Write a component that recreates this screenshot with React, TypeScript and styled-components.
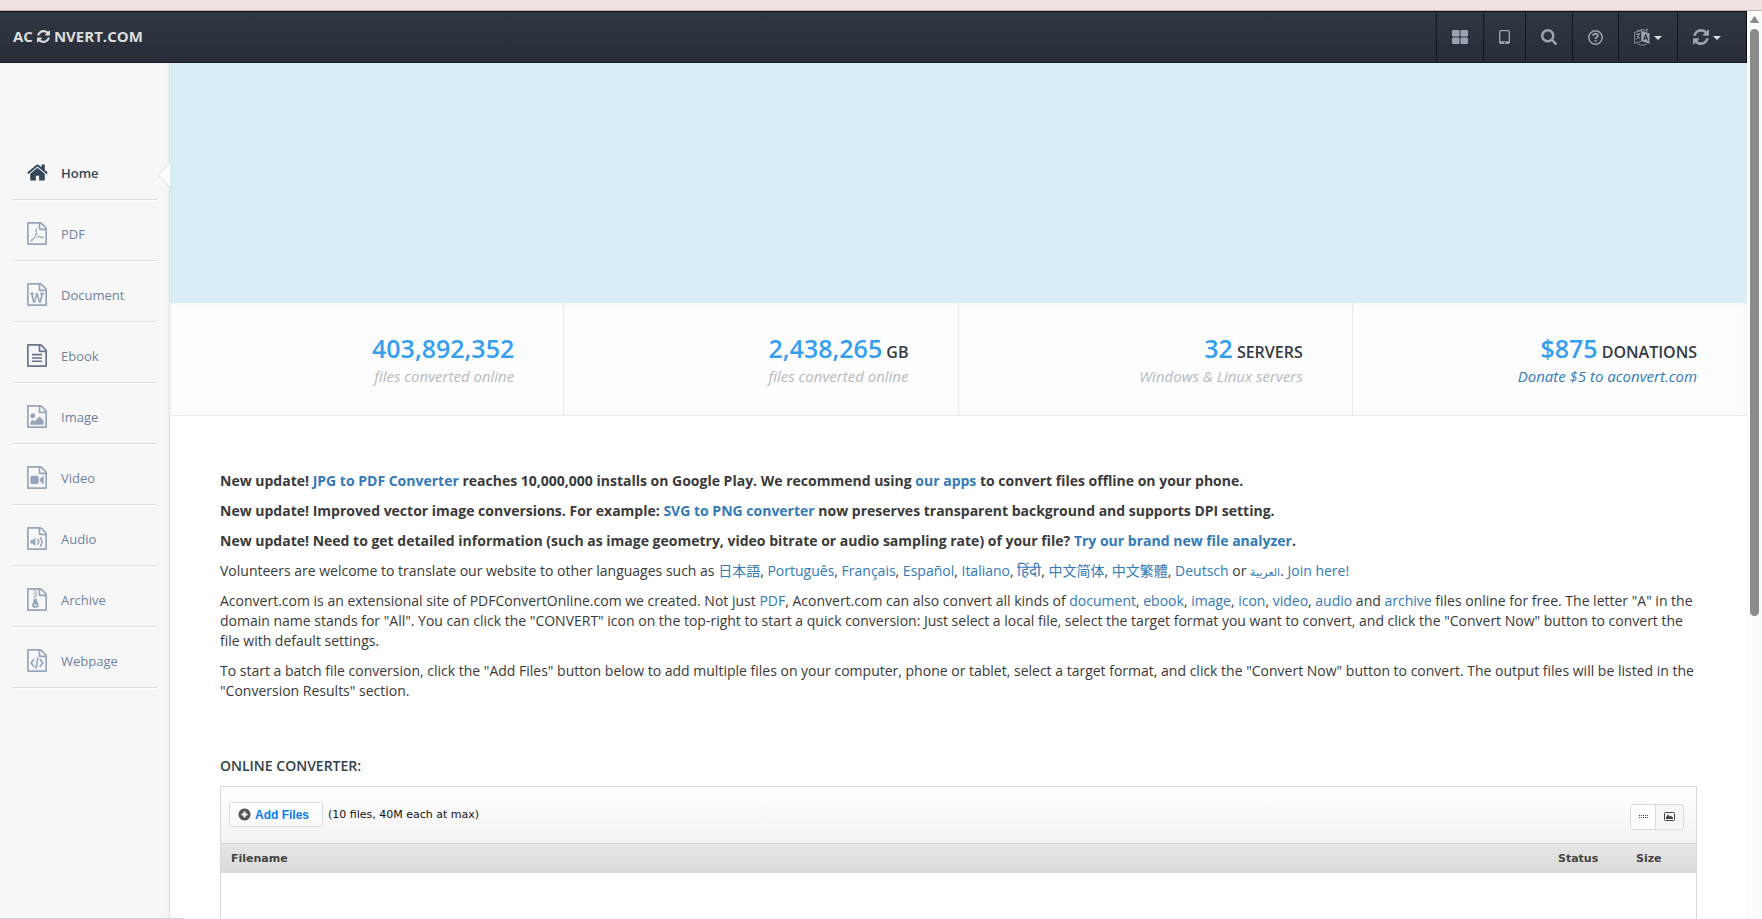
import React from "react";
import styled, { createGlobalStyle, css } from "styled-components";

const GlobalStyle = createGlobalStyle`
  *, *::before, *::after { box-sizing: border-box; }
  body {
    margin: 0;
    background: #fff;
    color: #3a3a3a;
    font: 14px/20px "Open Sans", "Noto Sans CJK SC", "DejaVu Sans", sans-serif;
  }
  a { color: #337ab7; text-decoration: none; }
  a:hover { text-decoration: underline; }
`;

/* ---------- page shell ---------- */

const Shell = styled.div`
  display: flex;
  flex-direction: column;
  height: 100vh;
  overflow: hidden;
  position: relative;
`;

const BrowserEdge = styled.div`
  flex: none;
  height: 11px;
  background: #f1e3e1;
  border-bottom: 1px solid #c4b1b1;
`;

const Viewport = styled.div`
  display: flex;
  flex: 1;
  min-height: 0;
`;

const Site = styled.div`
  display: flex;
  flex-direction: column;
  flex: 1;
  min-width: 0;
`;

const ScrollTrack = styled.div`
  flex: none;
  width: 15px;
  padding: 5px 3px 0;
  background: #fcfcfc;
`;

const ScrollArrow = styled.svg`
  display: block;
  width: 9px;
  height: 7px;
`;

const ScrollThumb = styled.div`
  margin-top: 6px;
  height: 65%;
  border-radius: 5px;
  background: #8b8b8b;
`;

const StatusEdge = styled.div`
  position: absolute;
  left: 0;
  bottom: 0;
  width: 184px;
  height: 1px;
  background: #d2d2d2;
`;

/* ---------- top bar ---------- */

const TopBar = styled.header`
  display: flex;
  flex: none;
  justify-content: space-between;
  height: 52px;
  border: 1px solid #0b0d10;
  border-left: 0;
  border-bottom-color: #181c24;
  background: linear-gradient(#2e3841, #282d39);
`;

const Brand = styled.a`
  display: flex;
  align-items: center;
  gap: 4px;
  padding: 0 13px 2px;
  color: #ddd;
  font-size: 15px;
  font-weight: 700;
  &:hover { text-decoration: none; }
`;

const BarTools = styled.nav`
  display: flex;
`;

const ToolButton = styled.button<{ $last?: boolean }>`
  display: flex;
  align-items: center;
  gap: 4px;
  padding: 0 ${(p) => (p.$last ? 25 : 15)}px 0 15px;
  border: 0;
  border-left: 1px solid #12151a;
  background: none;
  color: #9aa3b1;
  cursor: pointer;
`;

const Caret = styled.span`
  border: 4px solid transparent;
  border-top-color: #ddd;
  border-bottom: 0;
  margin-top: 2px;
`;

const Glyph = styled.svg<{ $w: number; $h: number }>`
  display: block;
  flex: none;
  width: ${(p) => p.$w}px;
  height: ${(p) => p.$h}px;
  fill: currentColor;
`;

/* ---------- side bar ---------- */

const Columns = styled.div`
  display: flex;
  flex: 1;
  min-height: 0;
`;

const SideBar = styled.nav`
  flex: none;
  width: 170px;
  padding: 76px 12px 0;
  border-right: 1px solid #d9e1e8;
  background: linear-gradient(90deg, #f7f7f7 96%, #f2f3f3);
`;

const SideItem = styled.a<{ $active?: boolean }>`
  display: flex;
  position: relative;
  align-items: center;
  gap: 14px;
  height: 61px;
  padding: 7px 0 0 15px;
  border-bottom: 1px solid #d8dde6;
  box-shadow: 0 1px 0 #fff;
  color: #6e829d;
  font-size: 13px;
  ${(p) => p.$active && css`
    color: #34475d;
    font-weight: 600;
  `}
`;

const IconCell = styled.span<{ $tone: string }>`
  display: flex;
  width: 20px;
  color: ${(p) => p.$tone};
`;

const ActiveNotch = styled.svg`
  position: absolute;
  right: -13px;
  top: 24px;
  width: 13px;
  height: 24px;
`;

/* ---------- main column ---------- */

const Main = styled.main`
  flex: 1;
  min-width: 0;
  overflow: hidden;
`;

const Banner = styled.div`
  height: 240px;
  background: #d9edf6;
`;

const Stats = styled.section`
  display: grid;
  grid-template-columns: repeat(4, 1fr);
  height: 113px;
  border-bottom: 1px solid #ebebed;
  background: #fdfdfd;
  box-shadow: inset 0 0 10px #f7f7f7;
`;

const Stat = styled.div`
  padding: 31px 49px 0 0;
  border-right: 1px solid #e6e7ec;
  text-align: right;
  &:last-child { border-right-color: transparent; }
`;

const StatHead = styled.div`
  color: #333b44;
  font-size: 16px;
  font-weight: 600;
  line-height: 28px;
`;

const StatValue = styled.span`
  color: #369ff0;
  font-size: 25px;
`;

const StatNote = styled.div`
  color: #b7babd;
  font-size: 15px;
  font-style: italic;
  line-height: 20px;
`;

const Content = styled.div`
  padding: 55px 50px 0;
`;

const Para = styled.p<{ $strong?: boolean }>`
  margin: 0 0 10px;
  font-weight: ${(p) => (p.$strong ? 700 : 400)};
`;

const LanguageLink = styled.a`
  &:lang(hi) { font-size: 15px; line-height: 16px; }
  &:lang(ar) { font-size: 11px; line-height: 16px; }
`;

const SectionTitle = styled.h2`
  margin: 55px 0 10px;
  color: #34404c;
  font-size: 14px;
  font-weight: 600;
  line-height: 20px;
`;

const Uploader = styled.section`
  min-height: 300px;
  border: 1px solid #d9d9d9;
  color: #111;
  font-family: "DejaVu Sans", sans-serif;
  font-size: 11px;
`;

const UploadBar = styled.div`
  display: flex;
  align-items: center;
  gap: 5px;
  height: 56px;
  padding: 0 12px 1px 8px;
  background: linear-gradient(#fff, #f3f3f3);
`;

const AddButton = styled.button`
  display: flex;
  align-items: center;
  gap: 4px;
  width: 94px;
  height: 25px;
  padding: 0 8px;
  border: 1px solid #d9d9d9;
  border-radius: 2px;
  background: linear-gradient(#fff, #f9f9f9);
  color: #0a7cf0;
  font: bold 12px "Liberation Sans", sans-serif;
  cursor: pointer;
`;

const ViewSwitch = styled.div`
  display: flex;
  height: 26px;
  margin: 4px 0 0 auto;
  border: 1px solid #d9d9d9;
  border-radius: 3px;
  overflow: hidden;
`;

const ViewButton = styled.button<{ $on?: boolean }>`
  display: flex;
  align-items: center;
  justify-content: center;
  width: 24px;
  padding: 0;
  border: 0;
  background: ${(p) => (p.$on ? "#fff" : "#f7f7f7")};
  color: #444;
  cursor: pointer;
  & + & {
    width: 28px;
    border-left: 1px solid #d9d9d9;
  }
`;

const FileTable = styled.table`
  width: 100%;
  border-collapse: collapse;
  table-layout: fixed;
`;

const FileHead = styled.th<{ $w?: number }>`
  width: ${(p) => (p.$w ? `${p.$w}px` : "auto")};
  height: 29px;
  padding: 1px 10px 0;
  border-top: 1px solid #d4d4d4;
  color: #444;
  text-align: left;
`;

const FileHeadRow = styled.tr`
  background: linear-gradient(#e6e6e6, #dadada);
`;

/* ---------- icons ---------- */

const REFRESH =
  "M1511 928q0 5-1 7-64 268-268 434.5t-478 166.5q-146 0-282.5-55t-243.5-157l-129 129q-19 19-45 19t-45-19-19-45v-448q0-26 19-45t45-19h448q26 0 45 19t19 45-19 45l-137 137q71 66 161 102t187 36q134 0 250-65t186-179q11-17 53-117 8-23 30-23h192q13 0 22.5 9.5t9.5 22.5zm25-800v448q0 26-19 45t-45 19h-448q-26 0-45-19t-19-45 19-45l138-138q-148-137-349-137-134 0-250 65t-186 179q-11 17-53 117-8 23-30 23h-199q-13 0-22.5-9.5t-9.5-22.5v-7q65-268 270-434.5t480-166.5q146 0 284 55.5t245 156.5l130-129q19-19 45-19t45 19 19 45z";

const SEARCH =
  "M1152 704q0-185-131.5-316.5t-316.5-131.5-316.5 131.5-131.5 316.5 131.5 316.5 316.5 131.5 316.5-131.5 131.5-316.5zm512 832q0 52-38 90t-90 38q-54 0-90-38l-343-342q-179 124-399 124-143 0-273.5-55.5t-225-150-150-225-55.5-273.5 55.5-273.5 150-225 225-150 273.5-55.5 273.5 55.5 225 150 150 225 55.5 273.5q0 220-124 399l343 343q37 37 37 90z";

const HOME =
  "M1408 992v480q0 26-19 45t-45 19h-384v-384h-256v384h-384q-26 0-45-19t-19-45v-480q0-1 .5-3t.5-3l575-474 575 474q1 2 1 6zm223-69l-62 74q-8 9-21 11h-3q-13 0-21-7l-692-577-692 577q-12 8-24 7-13-2-21-11l-62-74q-8-10-7-23.5t11-21.5l719-599q32-26 76-26t76 26l244 204v-195q0-14 9-23t23-9h192q14 0 23 9t9 23v408l219 182q10 8 11 21.5t-7 23.5z";

const SHEET =
  "M1468 380q28 28 48 76t20 88v1152q0 40-28 68t-68 28h-1344q-40 0-68-28t-28-68v-1600q0-40 28-68t68-28h896q40 0 88 20t76 48zm-444-244v376h376q-10-29-22-41l-313-313q-12-12-41-22zm384 1528v-1024h-416q-40 0-68-28t-28-68v-416h-768v1536h1280z";

const SHEET_MARKS: Record<string, string> = {
  PDF: "M894 1071q33 26 84 56 59-7 117-7 147 0 177 49 16 22 2 52 0 1-1 2l-2 2v1q-6 38-71 38-48 0-115-20t-130-53q-221 24-392 83-153 262-242 262-15 0-28-7l-24-12q-1-1-6-5-10-10-6-36 9-40 56-91.5t132-96.5q14-9 23 6 2 2 2 4 52-85 107-197 68-136 104-262-24-82-30.5-159.5t6.5-127.5q11-40 42-40h22q23 0 35 15 18 21 9 68-2 6-4 8 1 3 1 8v30q-2 123-14 192 55 164 146 238zm-576 411q52-24 137-158-51 40-87.5 84t-49.5 74zm398-920q-15 42-2 132 1-7 7-44 0-3 7-43 1-4 4-8-1-1-1-2-1-2-1-3-1-22-13-36 0 1-1 2v2zm-124 661q135-54 284-81-2-1-13-9.5t-16-13.5q-76-67-127-176-27 86-83 197-30 56-45 83zm646-16q-24-24-140-24 76 28 124 28 14 0 18-1 0-1-2-3z",
  Document:
    "M233 768v107h70l164 661h159l128-485q7-20 10-46 2-16 2-24h4l3 24q1 3 3.5 20t5.5 26l128 485h159l164-661h70v-107h-300v107h90l-99 438q-5 20-7 46l-2 21h-4l-3-21q-1-5-4-21t-5-25l-144-545h-114l-144 545q-2 9-4.5 24.5t-3.5 21.5l-4 21h-4l-2-21q-2-26-7-46l-99-438h90v-107h-300z",
  Ebook:
    "M384 768h768v128h-768zM384 1024h768v128h-768zM384 1280h768v128h-768z",
  Image:
    "M1280 1216v320h-1024v-192l192-192 128 128 384-384zm-832-192q-80 0-136-56t-56-136 56-136 136-56 136 56 56 136-56 136-136 56z",
  Video:
    "M768 768q52 0 90 38t38 90v384q0 52-38 90t-90 38h-384q-52 0-90-38t-38-90v-384q0-52 38-90t90-38h384zm492 2q20 8 20 30v576q0 22-20 30-8 2-12 2-14 0-23-9l-265-266v-90l265-266q9-9 23-9 4 0 12 2z",
  Audio:
    "M620 850q20 8 20 30v544q0 22-20 30-8 2-12 2-12 0-23-9l-166-167h-131q-14 0-23-9t-9-23v-192q0-14 9-23t23-9h131l166-167q16-15 35-7zm417 689q31 0 50-24 129-159 129-363t-129-363q-16-21-43-24t-47 14q-21 17-23.5 43.5t14.5 47.5q100 123 100 282t-100 282q-17 21-14.5 47.5t23.5 42.5q18 15 40 15zm-211-148q27 0 47-20 87-93 87-219t-87-219q-18-19-45-20t-46 17-20 44.5 18 46.5q52 57 52 131t-52 131q-19 20-18 46.5t20 44.5q20 17 44 17z",
  Archive:
    "M512 128h128v128h-128zM640 256h128v128h-128zM512 384h128v128h-128zM640 512h128v128h-128zM512 640h128v128h-128zM575 832h128q30 0 38 28l140 440q15 52 15 100 0 136-256 136t-256-136q0-48 15-100l138-440q8-28 38-28zM640 1280q-128 0-128 64t128 64 128-64-128-64z",
  Webpage:
    "M480 768q8-11 21-12.5t24 6.5l51 38q11 8 12.5 21t-6.5 24l-182 243 182 243q8 11 6.5 24t-12.5 21l-51 38q-11 8-24 6.5t-21-12.5l-226-301q-14-19 0-38zm802 301q14 19 0 38l-226 301q-8 11-21 12.5t-24-6.5l-51-38q-11-8-12.5-21t6.5-24l182-243-182-243q-8-11-6.5-24t12.5-21l51-38q11-8 24-6.5t21 12.5zm-620 461q-13-2-20.5-13t-5.5-24l138-831q2-13 13-20.5t24-5.5l63 10q13 2 20.5 13t5.5 24l-138 831q-2 13-13 20.5t-24 5.5z",
};

const RefreshIcon = ({ size }: { size: number }) => (
  <Glyph $w={size} $h={size} viewBox="0 0 1536 1536"><path d={REFRESH} /></Glyph>
);

const GridIcon = () => (
  <Glyph $w={16} $h={14} viewBox="0 0 17 14" preserveAspectRatio="none">
    <rect width="8" height="6.5" rx="1.2" />
    <rect x="9" width="8" height="6.5" rx="1.2" />
    <rect y="7.5" width="8" height="6.5" rx="1.2" />
    <rect x="9" y="7.5" width="8" height="6.5" rx="1.2" />
  </Glyph>
);

const TabletIcon = () => (
  <Glyph $w={11} $h={14} viewBox="0 0 12 14" preserveAspectRatio="none">
    <path fillRule="evenodd" d="M1.7 0h8.6Q12 0 12 1.7v10.6q0 1.7-1.7 1.7H1.7Q0 14 0 12.3V1.7Q0 0 1.7 0zM1.5 1.2v10h9v-10zM6 11.9a.7.7 0 1 0 .01 0z" />
  </Glyph>
);

const SearchIcon = () => (
  <Glyph $w={16} $h={16} viewBox="0 0 1664 1664"><path d={SEARCH} /></Glyph>
);

const HelpIcon = () => (
  <Glyph $w={15} $h={15} viewBox="0 0 15 15">
    <circle cx="7.5" cy="7.5" r="6.7" fill="none" stroke="currentColor" strokeWidth="1.5" />
    <path d="M5 5.8q.4-2 2.5-2t2.4 1.8q0 1-1.3 1.7-1 .6-1 1.7" fill="none" stroke="currentColor" strokeWidth="1.9" />
    <rect x="6.6" y="9.9" width="1.9" height="1.9" />
  </Glyph>
);

const TranslateIcon = () => (
  <Glyph $w={16} $h={18} viewBox="0 0 16 18">
    <path d="M.6 4.5 7.5 2.3v10.9L.6 15.3z" fill="none" stroke="currentColor" strokeWidth=".8" />
    <path d="M2 6.8l4-1.2M4 5v1.2M5.3 6.2Q4.500 9.800 2 11.500M3 8q1 2 3.200 2.400" fill="none" stroke="currentColor" strokeWidth=".9" />
    <path fillRule="evenodd" d="M8 3l7.5 2.2v10.5L8 13.2zM11.3 6l-2 5.5 1.2.4.4-1.2 1.9.6.4 1.3 1.2.4-2-6.6zm.6 2 .6 2.2-1.2-.4z" />
    <path d="M3 3Q7 .8 12.5 2.2L13 .8v3M3.5 16q4 2.3 9 .4" fill="none" stroke="currentColor" strokeWidth=".8" />
  </Glyph>
);

const HomeIcon = () => (
  <Glyph $w={21} $h={17} viewBox="0 240 1664 1310"><path d={HOME} /></Glyph>
);

const FileIcon = ({ kind }: { kind: string }) => (
  <Glyph $w={20} $h={23} viewBox="0 0 1536 1792" preserveAspectRatio="none">
    <path d={SHEET} />
    <path fillRule="evenodd" d={SHEET_MARKS[kind]} />
  </Glyph>
);

const PlusIcon = () => (
  <Glyph $w={13} $h={13} viewBox="0 0 13 13">
    <path fill="#555" fillRule="evenodd" d="M6.5.5a6 6 0 1 0 .01 0zM5.5 3.5h2v2h2v2h-2v2h-2v-2h-2v-2h2z" />
  </Glyph>
);

const ListViewIcon = () => (
  <Glyph $w={10} $h={4} viewBox="0 0 10 4" shapeRendering="crispEdges">
    {[1, 3, 5, 7, 9].map((x) => (
      <React.Fragment key={x}>
        <rect x={x} width="1" height="1" />
        <rect x={x} y="2" width="1" height="1" />
      </React.Fragment>
    ))}
  </Glyph>
);

const ThumbViewIcon = () => (
  <Glyph $w={11} $h={9} viewBox="0 0 11 9">
    <rect x=".5" y=".5" width="10" height="8" rx="1" fill="none" stroke="currentColor" />
    <path d="M2 7V5l1-1 1-2 1 2 1 .5 1-1 1 1.5 1 .5V7z" />
  </Glyph>
);

/* ---------- data ---------- */

const FORMATS = ["PDF", "Document", "Ebook", "Image", "Video", "Audio", "Archive", "Webpage"];

const STATS = [
  { value: "403,892,352", word: "", note: "files converted online" },
  { value: "2,438,265", word: "GB", note: "files converted online" },
  { value: "32", word: "SERVERS", note: "Windows & Linux servers" },
  { value: "$875", word: "DONATIONS", note: "Donate $5 to aconvert.com", link: true },
];

const LANGUAGES: [string, string][] = [
  ["日本語", "ja"], ["Português", "pt"], ["Français", "fr"], ["Español", "es"], ["Italiano", "it"],
  ["हिंदी", "hi"], ["中文简体", "zh-CN"], ["中文繁體", "zh-TW"],
];

export default function App() {
  return (
    <Shell>
      <GlobalStyle />
      <BrowserEdge />
      <Viewport>
        <Site>
          <TopBar>
            <Brand href="#" aria-label="Aconvert.com">
              <span>AC</span>
              <RefreshIcon size={13} />
              <span>NVERT.COM</span>
            </Brand>
            <BarTools aria-label="Tools">
              <ToolButton aria-label="All tools"><GridIcon /></ToolButton>
              <ToolButton aria-label="Apps"><TabletIcon /></ToolButton>
              <ToolButton aria-label="Search"><SearchIcon /></ToolButton>
              <ToolButton aria-label="Help"><HelpIcon /></ToolButton>
              <ToolButton aria-label="Language"><TranslateIcon /><Caret /></ToolButton>
              <ToolButton aria-label="Convert" $last><RefreshIcon size={16} /><Caret /></ToolButton>
            </BarTools>
          </TopBar>
          <Columns>
            <SideBar aria-label="Formats">
              <SideItem href="#" $active>
                <IconCell $tone="#34475d"><HomeIcon /></IconCell>
                Home
                <ActiveNotch viewBox="0 0 13 24">
                  <path d="M13 0 1 12 13 24z" fill="#fff" />
                  <path d="M13 0 1 12 13 24" fill="none" stroke="#d3e0e8" />
                </ActiveNotch>
              </SideItem>
              {FORMATS.map((name) => (
                <SideItem href="#" key={name}>
                  <IconCell $tone={name === "Ebook" ? "#67748a" : "#97a5ba"}><FileIcon kind={name} /></IconCell>
                  {name}
                </SideItem>
              ))}
            </SideBar>
            <Main>
              <Banner />
              <Stats>
                {STATS.map((s) => (
                  <Stat key={s.value}>
                    <StatHead>
                      <StatValue>{s.value}</StatValue>
                      {s.word && <span> {s.word}</span>}
                    </StatHead>
                    <StatNote>{s.link ? <a href="#">{s.note}</a> : s.note}</StatNote>
                  </Stat>
                ))}
              </Stats>
              <Content>
                <Para $strong>
                  New update! <a href="#">JPG to PDF Converter</a> reaches 10,000,000 installs on Google Play. We
                  recommend using <a href="#">our apps</a> to convert files offline on your phone.
                </Para>
                <Para $strong>
                  New update! Improved vector image conversions. For example: <a href="#">SVG to PNG converter</a> now
                  preserves transparent background and supports DPI setting.
                </Para>
                <Para $strong>
                  New update! Need to get detailed information (such as image geometry, video bitrate or audio sampling
                  rate) of your file? <a href="#">Try our brand new file analyzer</a>.
                </Para>
                <Para>
                  Volunteers are welcome to translate our website to other languages such as{" "}
                  {LANGUAGES.map(([label, code]) => (
                    <React.Fragment key={code}><LanguageLink href="#" lang={code}>{label}</LanguageLink>, </React.Fragment>
                  ))}
                  <LanguageLink href="#" lang="de">Deutsch</LanguageLink> or{" "}
                  <LanguageLink href="#" lang="ar">العربية</LanguageLink>. <a href="#">Join here!</a>
                </Para>
                <Para>
                  Aconvert.com is an extensional site of PDFConvertOnline.com we created. Not just <a href="#">PDF</a>,
                  Aconvert.com can also convert all kinds of <a href="#">document</a>, <a href="#">ebook</a>,{" "}
                  <a href="#">image</a>, <a href="#">icon</a>, <a href="#">video</a>, <a href="#">audio</a> and{" "}
                  <a href="#">archive</a> files online for free. The letter "A" in the domain name stands for "All". You
                  can click the "CONVERT" icon on the top-right to start a quick conversion: Just select a local file,
                  select the target format you want to convert, and click the "Convert Now" button to convert the file
                  with default settings.
                </Para>
                <Para>
                  To start a batch file conversion, click the "Add Files" button below to add multiple files on your
                  computer, phone or tablet, select a target format, and click the "Convert Now" button to convert. The
                  output files will be listed in the "Conversion Results" section.
                </Para>
                <SectionTitle>ONLINE CONVERTER:</SectionTitle>
                <Uploader>
                  <UploadBar>
                    <AddButton><PlusIcon />Add Files</AddButton>
                    <span>(10 files, 40M each at max)</span>
                    <ViewSwitch>
                      <ViewButton $on aria-label="List view"><ListViewIcon /></ViewButton>
                      <ViewButton aria-label="Thumbnail view"><ThumbViewIcon /></ViewButton>
                    </ViewSwitch>
                  </UploadBar>
                  <FileTable>
                    <thead>
                      <FileHeadRow>
                        <FileHead>Filename</FileHead>
                        <FileHead $w={78}>Status</FileHead>
                        <FileHead $w={70}>Size</FileHead>
                      </FileHeadRow>
                    </thead>
                  </FileTable>
                </Uploader>
              </Content>
            </Main>
          </Columns>
        </Site>
        <ScrollTrack aria-hidden="true">
          <ScrollArrow viewBox="0 0 9 7"><path d="M4.5.5 8.5 6.5h-8z" fill="#8b8b8b" stroke="#8b8b8b" strokeLinejoin="round" /></ScrollArrow>
          <ScrollThumb />
        </ScrollTrack>
      </Viewport>
      <StatusEdge />
    </Shell>
  );
}
